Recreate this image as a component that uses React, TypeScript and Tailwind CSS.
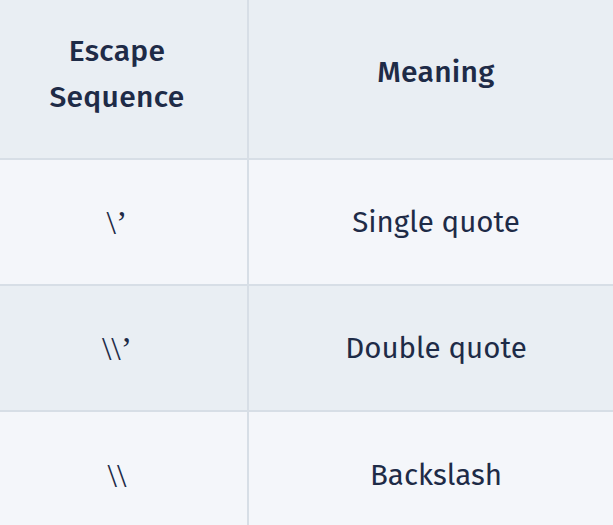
import React from "react";

const rows = [
  { seq: "\\\u2019", meaning: "Single quote", bg: "bg-[#f4f6fa]" },
  { seq: "\\\\\u2019", meaning: "Double quote", bg: "bg-[#e9eef3]" },
  { seq: "\\\\", meaning: "Backslash", bg: "bg-[#f4f6fa]" },
];

export default function App() {
  return (
    <div className="w-[613px] h-[525px] overflow-hidden bg-[#f4f6fa] text-[#1e2b47] font-['Fira_Sans','Open_Sans','Noto_Sans',sans-serif]">
      <div className="ml-[-13px] w-[636px] flex flex-col">
        <div className="flex h-[160px] bg-[#e9eef3] border-b-2 border-[#d7dee6]">
          <div className="w-[262px] border-r-2 border-[#d7dee6] flex items-center justify-center pb-[10px]">
            <div className="text-[30px] font-medium tracking-[0.3px] leading-[46px] text-center">
              Escape
              <br />
              Sequence
            </div>
          </div>
          <div className="flex-1 flex items-center justify-center pb-[14px]">
            <div className="text-[30px] font-medium tracking-[0.3px]">Meaning</div>
          </div>
        </div>
        {rows.map((r, i) => (
          <div
            key={i}
            className={`flex h-[126px] ${r.bg} ${i < rows.length - 1 ? "border-b-2 border-[#d7dee6]" : ""}`}
          >
            <div className="w-[262px] border-r-2 border-[#d7dee6] flex items-center justify-center">
              <span className="text-[34px] font-['Liberation_Serif',serif]">{r.seq}</span>
            </div>
            <div className="flex-1 flex items-center justify-center">
              <span className="text-[29.5px]">{r.meaning}</span>
            </div>
          </div>
        ))}
      </div>
    </div>
  );
}
